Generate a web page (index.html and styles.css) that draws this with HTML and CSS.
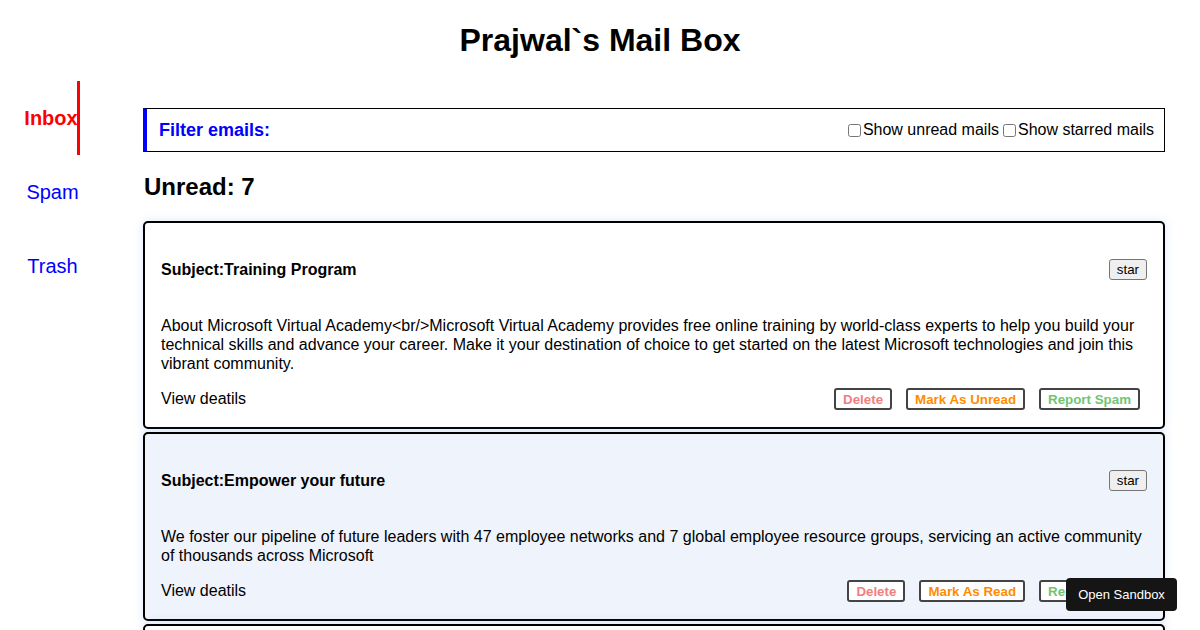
FILE: index.html
```html
<!DOCTYPE html>
<html lang="en">
<head>
  <meta charset="UTF-8" />
  <meta name="viewport" content="width=device-width, initial-scale=1" />
  <title>Prajwal`s Mail Box</title>
  <link rel="stylesheet" href="styles.css">
</head>
<body>

  <h1 class="page-title">Prajwal`s Mail Box</h1>

  <div class="layout">
    <nav class="sidebar">
      <a class="nav-link active" href="#">Inbox</a>
      <a class="nav-link" href="#">Spam</a>
      <a class="nav-link" href="#">Trash</a>
    </nav>

    <main class="mailbox">
      <section class="filter-bar">
        <span class="filter-title">Filter emails:</span>
        <div class="filter-options">
          <label><input type="checkbox" />Show unread mails</label>
          <label><input type="checkbox" />Show starred mails</label>
        </div>
      </section>

      <h2 class="unread-count">Unread: 7</h2>

      <article class="mail-card">
        <div class="mail-head">
          <h4 class="mail-subject">Subject:Training Program</h4>
          <button class="star-btn">star</button>
        </div>
        <p class="mail-body">About Microsoft Virtual Academy&lt;br/&gt;Microsoft Virtual Academy provides free online training by world-class experts to help you build your technical skills and advance your career. Make it your destination of choice to get started on the latest Microsoft technologies and join this vibrant community.</p>
        <div class="mail-foot">
          <span class="view-link">View deatils</span>
          <div class="mail-actions">
            <button class="act-btn delete">Delete</button>
            <button class="act-btn mark">Mark As Unread</button>
            <button class="act-btn spam">Report Spam</button>
          </div>
        </div>
      </article>

      <article class="mail-card read">
        <div class="mail-head">
          <h4 class="mail-subject">Subject:Empower your future</h4>
          <button class="star-btn">star</button>
        </div>
        <p class="mail-body">We foster our pipeline of future leaders with 47 employee networks and 7 global employee resource groups, servicing an active community of thousands across Microsoft</p>
        <div class="mail-foot">
          <span class="view-link">View deatils</span>
          <div class="mail-actions">
            <button class="act-btn delete">Delete</button>
            <button class="act-btn mark">Mark As Read</button>
            <button class="act-btn spam">Report Spam</button>
          </div>
        </div>
      </article>

      <article class="mail-card">
        <div class="mail-head">
          <h4 class="mail-subject">Subject:Imagine Cup</h4>
          <button class="star-btn">star</button>
        </div>
        <p class="mail-body">Imagine Cup is a global competition that empowers the next generation of computer science students to team up and use their creativity, passion and knowledge of technology.</p>
        <div class="mail-foot">
          <span class="view-link">View deatils</span>
          <div class="mail-actions">
            <button class="act-btn delete">Delete</button>
            <button class="act-btn mark">Mark As Unread</button>
            <button class="act-btn spam">Report Spam</button>
          </div>
        </div>
      </article>
    </main>
  </div>

  <div class="sandbox-tip">Open Sandbox</div>

</body>
</html>
```

FILE: styles.css
```css
body {
  font-family: 'Liberation Sans', Arial, sans-serif;
  margin: 0 8px 8px;
  color: #000;
  background: #fff;
}

.page-title {
  text-align: center;
  font-size: 32px;
  margin: 0;
  padding: 22px 0;
  line-height: 37px;
}

.layout {
  display: flex;
  align-items: flex-start;
}

.sidebar {
  display: flex;
  flex-direction: column;
  width: 55px;
  margin-left: 17px;
}

.nav-link {
  height: 74px;
  display: flex;
  align-items: center;
  justify-content: center;
  font-size: 20px;
  color: #0000ff;
  text-decoration: none;
}

.nav-link.active {
  color: #ff0000;
  font-weight: bold;
  border-right: 3px solid #ff0000;
}

.mailbox {
  flex: 1;
  margin: 0 27px 0 63px;
  padding-top: 27px;
}

.filter-bar {
  height: 44px;
  box-sizing: border-box;
  border: 1px solid #000;
  border-left: 4px solid #0000ff;
  padding: 0 10px 0 12px;
  display: flex;
  align-items: center;
  justify-content: space-between;
}

.filter-title {
  color: #0000ff;
  font-weight: bold;
  font-size: 18px;
}

.filter-options {
  font-size: 16px;
  display: flex;
  gap: 4px;
}

.filter-options input {
  margin: 0 2px 0 0;
  width: 13px;
  height: 13px;
}

.filter-options label {
  display: flex;
  align-items: center;
}

.unread-count {
  font-size: 24px;
  margin: 21px 0 20px 1px;
}

.mail-card {
  border: 2px solid #000;
  border-radius: 5px;
  padding: 16px 16px 17px;
  margin-bottom: 3px;
  background: #fff;
  box-shadow: 0 0 10px rgba(120, 160, 235, 0.25);
}

.mail-card.read {
  background: #eff3fb;
}

.mail-head {
  display: flex;
  align-items: center;
  justify-content: space-between;
}

.mail-subject {
  font-size: 16px;
  margin: 22px 0 21px;
}

.star-btn {
  font-family: 'Liberation Sans', Arial, sans-serif;
  font-size: 13.33px;
  padding: 1px 7px;
  background: #efefef;
  border: 1px solid #767676;
  border-radius: 3px;
  height: 21px;
  color: #000;
}

.mail-body {
  font-size: 16px;
  line-height: 19px;
  margin: 16px 0 15px;
}

.mail-foot {
  display: flex;
  align-items: center;
  justify-content: space-between;
}

.view-link {
  font-size: 16px;
}

.mail-actions {
  display: flex;
}

.act-btn {
  font-family: 'Liberation Sans', Arial, sans-serif;
  font-size: 13.33px;
  font-weight: bold;
  padding: 1px 7px;
  margin: 0 7px;
  background: #fff;
  border: 2px solid #444;
  border-radius: 3px;
  height: 22px;
}

.act-btn.delete { color: #f08080; }
.act-btn.mark { color: #ff8c00; }
.act-btn.spam { color: #72c472; }

.sandbox-tip {
  position: fixed;
  right: 23px;
  bottom: 19px;
  width: 111px;
  height: 33px;
  background: #151515;
  color: #fff;
  border-radius: 4px;
  font-size: 13px;
  display: flex;
  align-items: center;
  justify-content: center;
}
```
